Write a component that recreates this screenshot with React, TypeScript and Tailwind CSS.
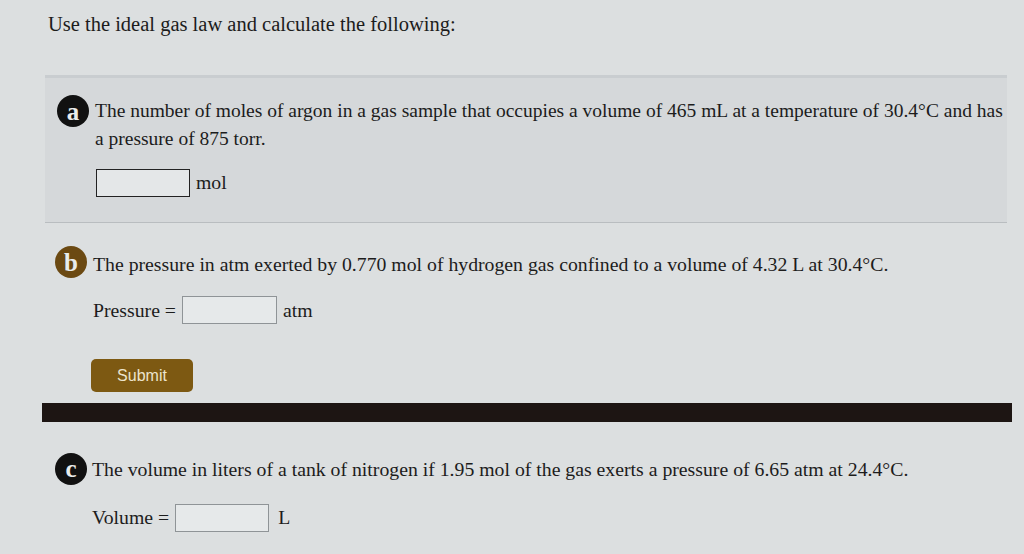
const serif = { fontFamily: '"Liberation Serif", "Times New Roman", serif' };

function Badge({ letter, color }: { letter: string; color: string }) {
    return (
        <span
            className={`inline-flex shrink-0 items-center justify-center w-[32px] h-[32px] rounded-full text-[25px] leading-none font-bold text-[#e9ecec] ${color}`}
        >
            {letter}
        </span>
    );
}

function AnswerBox({ className = "" }: { className?: string }) {
    return <input type="text" className={`h-[28px] bg-[#e4e7e8] border border-[#8f9497] outline-none ${className}`} />;
}

export default function App() {
    return (
        <div className="w-[1024px] h-[554px] overflow-hidden bg-[#dcdfe0] text-[#1c1c1c]" style={serif}>
            <div className="ml-[45px] w-[962px]">
                {/* Heading */}
                <div className="pt-[9px] pl-[3px] h-[78px] border-b-[3px] border-[#c9cdd0] text-[20.5px]">
                    Use the ideal gas law and calculate the following:
                </div>

                {/* Part a */}
                <div className="bg-[#d5d8da] h-[145px] border-b border-[#b9bdc0] pt-[17px] pl-[12px]">
                    <div className="flex items-start gap-[6px] text-[19.5px] leading-[28px]">
                        <Badge letter="a" color="bg-[#111111]" />
                        <div className="pt-[2px] whitespace-nowrap">
                            The number of moles of argon in a gas sample that occupies a volume of 465 mL at a temperature of 30.4°C and has
                            <br />a pressure of 875 torr.
                        </div>
                    </div>
                    <div className="flex items-center gap-[6px] mt-[15px] ml-[39px] text-[19.75px]">
                        <AnswerBox className="w-[94px] border-[#222] bg-[#dfe2e3]" />
                        <span>mol</span>
                    </div>
                </div>

                {/* Part b */}
                <div className="pt-[22px] pl-[10px]">
                    <div className="flex items-center gap-[6px] text-[19.75px]">
                        <Badge letter="b" color="bg-[#6b4912]" />
                        <span className="pt-[5px] whitespace-nowrap">The pressure in atm exerted by 0.770 mol of hydrogen gas confined to a volume of 4.32 L at 30.4°C.</span>
                    </div>
                    <div className="flex items-center gap-[6px] mt-[16px] ml-[38px] text-[19.75px]">
                        <span>Pressure =</span>
                        <AnswerBox className="w-[95px] bg-[#e6e9ea]" />
                        <span>atm</span>
                    </div>
                    <button
                        type="button"
                        className="block mt-[34px] ml-[36px] w-[102px] h-[33px] rounded-[5px] bg-[#7d5912] text-[#ece4cc] text-[16px]"
                        style={{ fontFamily: '"Liberation Sans", Arial, sans-serif' }}
                    >
                        Submit
                    </button>
                </div>

                {/* Divider */}
                <div className="mt-[11px] -ml-[3px] w-[970px] h-[19px] bg-[#1d1513]" />

                {/* Part c */}
                <div className="pt-[30px] pl-[10px]">
                    <div className="flex items-center gap-[5px] text-[19.75px]">
                        <Badge letter="c" color="bg-[#111111]" />
                        <span className="pt-[3px] whitespace-nowrap">The volume in liters of a tank of nitrogen if 1.95 mol of the gas exerts a pressure of 6.65 atm at 24.4°C.</span>
                    </div>
                    <div className="flex items-center gap-[6px] mt-[18px] ml-[37px] text-[19.75px]">
                        <span>Volume =</span>
                        <AnswerBox className="w-[94px] bg-[#e6e9ea]" />
                        <span className="ml-[3px]">L</span>
                    </div>
                </div>
            </div>
        </div>
    );
}
